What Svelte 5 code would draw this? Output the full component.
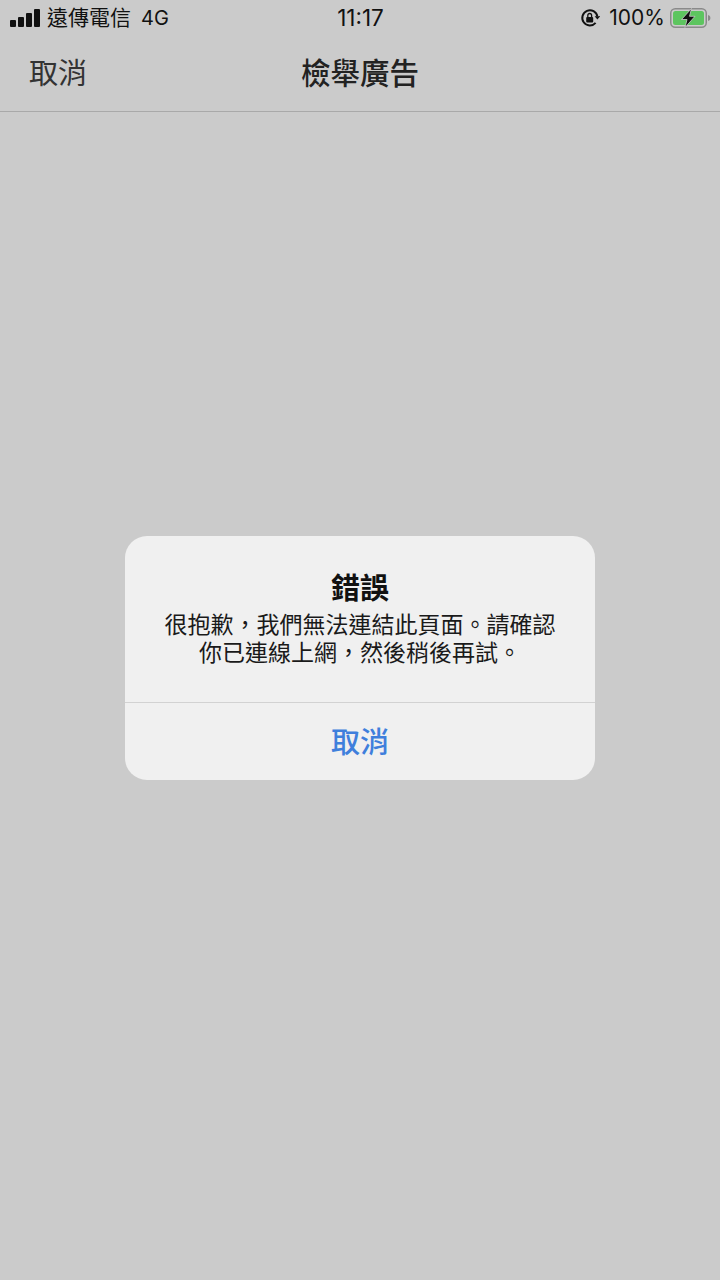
<script>
  const bars = [7, 10, 14, 18]
</script>

<main class="page">
  <div class="status">
    <div class="status-left">
      <div class="signal">
        {#each bars as h}
          <span class="bar" style="height: {h}px"></span>
        {/each}
      </div>
      <span class="carrier">遠傳電信</span>
      <span class="network">4G</span>
    </div>
    <span class="time">11:17</span>
    <div class="status-right">
      <svg class="lock" width="20" height="20" viewBox="0 0 20 20">
        <path d="M15.6 14.9A7.6 7.6 0 1 1 17.4 8.6" fill="none" stroke="#111" stroke-width="2"/>
        <path d="M14.6 8.2h5.6l-2.8 3.4z" fill="#111"/>
        <rect x="6.2" y="9" width="7" height="5.6" rx="1" fill="#111"/>
        <path d="M7.8 9V7.4a1.9 1.9 0 0 1 3.8 0V9" fill="none" stroke="#111" stroke-width="1.3"/>
      </svg>
      <span class="percent">100%</span>
      <svg class="battery" width="41" height="20" viewBox="0 0 41 20">
        <rect x="0.75" y="0.75" width="35.5" height="18.5" rx="4.5" fill="none" stroke="#8a8a8a" stroke-width="1.5"/>
        <rect x="3" y="3" width="31" height="14" rx="2.5" fill="#5dc55f"/>
        <path d="M38 7c1.6.4 2.4 1.5 2.4 3s-.8 2.600-2.400 3z" fill="#8a8a8a"/>
        <path d="M21.500 0.500 11.500 11.500h5.500l-2 8 10-11.200h-5.500z" fill="#111" stroke="#cbcbcb" stroke-width="0.8"/>
      </svg>
    </div>
  </div>

  <nav class="nav">
    <button class="nav-cancel">取消</button>
    <h1 class="nav-title">檢舉廣告</h1>
  </nav>

  <div class="content">
    <div class="dialog">
      <div class="dialog-body">
        <h2>錯誤</h2>
        <p>很抱歉，我們無法連結此頁面。請確認<br />你已連線上網，然後稍後再試。</p>
      </div>
      <button class="dialog-action">取消</button>
    </div>
  </div>
</main>

<style>
  :global(body) {
    background: #cbcbcb;
  }
  .page {
    width: 720px;
    height: 1280px;
    display: flex;
    flex-direction: column;
    background: #cbcbcb;
    color: #111;
    font-family: "Liberation Sans", "Noto Sans CJK TC", sans-serif;
    overflow: hidden;
  }
  .status {
    height: 34px;
    padding: 1px 9px 0 10px;
    box-sizing: border-box;
    display: grid;
    grid-template-columns: 1fr auto 1fr;
    align-items: center;
  }
  .status-left {
    display: flex;
    align-items: center;
  }
  .signal {
    display: flex;
    align-items: flex-end;
    gap: 2px;
    height: 18px;
    margin-right: 7px;
  }
  .bar {
    width: 6px;
    background: #111;
    border-radius: 1px;
  }
  .carrier {
    font-size: 21px;
    line-height: 33px;
  }
  .network {
    font-size: 20px;
    margin-left: 10px;
    font-family: "Inter", "Liberation Sans", sans-serif;
  }
  .time {
    font-size: 22.500px;
    font-family: "Inter", "Liberation Sans", sans-serif;
  }
  .status-right {
    display: flex;
    align-items: center;
    justify-content: flex-end;
  }
  .lock {
    margin-right: 9px;
  }
  .percent {
    font-size: 21px;
    font-family: "Inter", "Liberation Sans", sans-serif;
    margin-right: 5px;
  }
  .nav {
    position: relative;
    height: 78px;
    padding-top: 2px;
    box-sizing: border-box;
    display: flex;
    align-items: center;
    justify-content: center;
    border-bottom: 1px solid #a9a9a9;
  }
  .nav-cancel {
    position: absolute;
    left: 29px;
    top: 18px;
    padding: 0;
    border: none;
    background: none;
    font: inherit;
    font-size: 29px;
    line-height: 44px;
    color: #333;
  }
  .nav-title {
    margin: 0;
    font-size: 29.500px;
    font-weight: 500;
    line-height: 44px;
    color: #222;
  }
  .content {
    flex: 1;
    display: flex;
    justify-content: center;
    padding-top: 424px;
  }
  .dialog {
    width: 470px;
    height: 244px;
    display: flex;
    flex-direction: column;
    background: #f0f0f0;
    border-radius: 22px;
    overflow: hidden;
  }
  .dialog-body {
    height: 167px;
    padding-top: 31px;
    box-sizing: border-box;
    text-align: center;
    border-bottom: 1px solid #d2d2d2;
  }
  .dialog-body h2 {
    margin: 0;
    font-size: 29px;
    font-weight: 700;
    line-height: 44px;
    color: #111;
  }
  .dialog-body p {
    margin: 0;
    font-size: 23px;
    line-height: 28px;
    color: #1a1a1a;
  }
  .dialog-action {
    flex: 1;
    padding: 0 0 4px;
    border: none;
    background: none;
    font: inherit;
    font-size: 29px;
    font-weight: 500;
    color: #3f7fdc;
  }
</style>
